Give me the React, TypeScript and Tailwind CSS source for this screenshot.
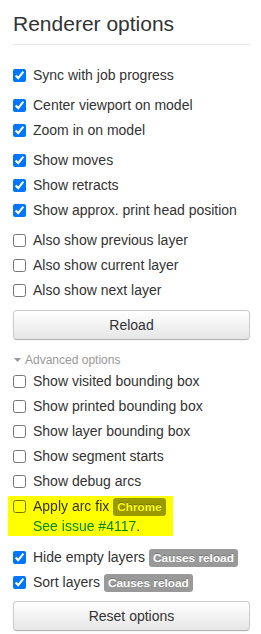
import React from 'react';

type Opt = { label: string; checked?: boolean; badge?: string };

const groups: Opt[][] = [
  [{ label: 'Sync with job progress', checked: true }],
  [
    { label: 'Center viewport on model', checked: true },
    { label: 'Zoom in on model', checked: true },
  ],
  [
    { label: 'Show moves', checked: true },
    { label: 'Show retracts', checked: true },
    { label: 'Show approx. print head position', checked: true },
  ],
  [
    { label: 'Also show previous layer' },
    { label: 'Also show current layer' },
    { label: 'Also show next layer' },
  ],
];

const advanced: Opt[] = [
  { label: 'Show visited bounding box' },
  { label: 'Show printed bounding box' },
  { label: 'Show layer bounding box' },
  { label: 'Show segment starts' },
  { label: 'Show debug arcs' },
];

const Badge: React.FC<{ children: React.ReactNode }> = ({ children }) => (
  <span className="inline-block ml-[4px] px-[4px] py-[2px] rounded-[3px] bg-[#999] text-white font-bold text-[11.844px] leading-[14px] align-baseline [text-shadow:0_-1px_0_rgba(0,0,0,0.25)]">
    {children}
  </span>
);

const CheckRow: React.FC<{ opt: Opt; className?: string }> = ({ opt, className }) => (
  <label className={`flex items-start h-5 leading-5 ${className ?? 'mb-[5px]'}`}>
    <input
      type="checkbox"
      defaultChecked={opt.checked}
      className="m-0 mt-[4px] w-[13px] h-[13px] shrink-0"
    />
    <span className="ml-[7px] whitespace-nowrap">
      {opt.label}
      {opt.badge && <Badge>{opt.badge}</Badge>}
    </span>
  </label>
);

const Button: React.FC<{ children: React.ReactNode; className?: string }> = ({ children, className }) => (
  <button
    className={`block w-full h-[30px] px-3 rounded-[4px] border border-[#ccc] border-b-[#b3b3b3] bg-gradient-to-b from-white to-[#e6e6e6] text-[14px] leading-5 text-[#333] shadow-[inset_0_1px_0_rgba(255,255,255,0.2),0_1px_2px_rgba(0,0,0,0.05)] ${className ?? ''}`}
  >
    {children}
  </button>
);

export default function App() {
  return (
    <div className="w-[261px] min-h-screen flex flex-col bg-white pl-[13px] pr-[11px] pt-[4px] text-[14px] leading-5 text-[#333] font-['Liberation_Sans',Arial,sans-serif]">
      {/* Header */}
      <div className="text-[21px] leading-[40px] border-b border-[#e5e5e5] mb-5">Renderer options</div>

      {/* Main options */}
      {groups.map((g, i) => (
        <div key={i} className="flex flex-col mb-[5px]">
          {g.map((o) => (
            <CheckRow key={o.label} opt={o} />
          ))}
        </div>
      ))}

      <Button>Reload</Button>

      {/* Advanced */}
      <div className="mt-[10px] mb-[1px] flex items-center h-5 text-[12px] text-[#999]">
        <svg width="7" height="4" viewBox="0 0 7 4" className="ml-[1px] mr-[4px]">
          <path d="M0 0h7L3.5 4z" fill="#999" />
        </svg>
        Advanced options
      </div>

      {advanced.map((o) => (
        <CheckRow key={o.label} opt={o} />
      ))}

      <div className="self-start -ml-[5px] pl-[5px] pr-[7px] mb-[11px] bg-[#ffff00] isolate">
        <div className="mix-blend-multiply">
          <CheckRow opt={{ label: 'Apply arc fix', badge: 'Chrome' }} className="mb-0" />
          <div className="pl-5 h-5 leading-5">
            <span className="text-[#0088cc]">See issue #4117</span>.
          </div>
        </div>
      </div>

      <div className="flex flex-col">
        <CheckRow opt={{ label: 'Hide empty layers', checked: true, badge: 'Causes reload' }} />
        <CheckRow opt={{ label: 'Sort layers', checked: true, badge: 'Causes reload' }} />
      </div>

      <Button className="mt-[4px]">Reset options</Button>
    </div>
  );
}
